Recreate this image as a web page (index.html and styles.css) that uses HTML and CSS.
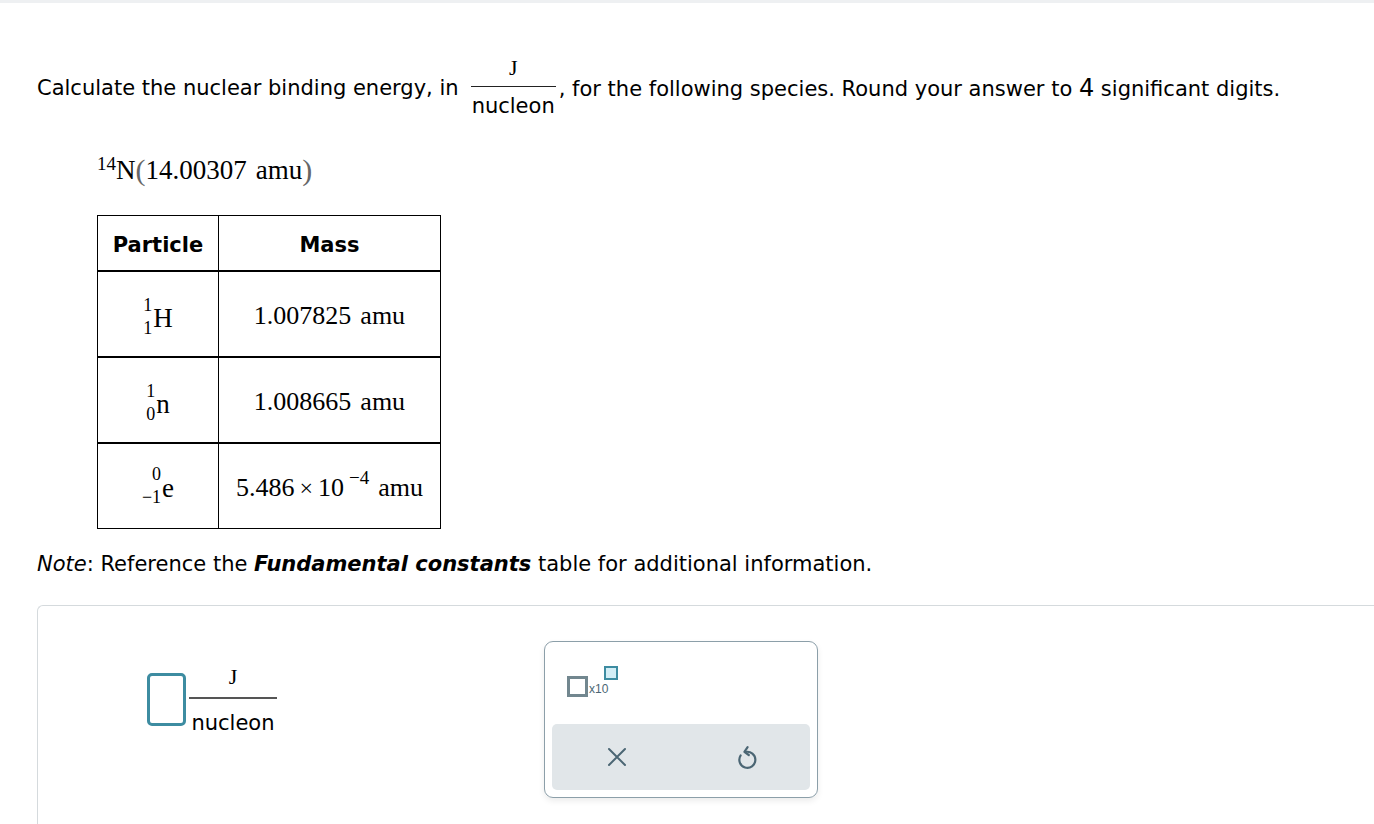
FILE: index.html
```html
<!DOCTYPE html>
<html>
<head>
<meta charset="utf-8">
<link rel="stylesheet" href="styles.css">
</head>
<body>
<div class="topbar"></div>
<div class="page">
  <div class="prompt"><span>Calculate the nuclear binding energy, in</span><span class="frac"><span class="num">J</span><span class="den">nucleon</span></span><span>, for the following species. Round your answer to <span class="four">4</span> significant digits.</span></div>

  <div class="species"><span class="sup14">14</span>N<span class="paren">(</span>14.00307<span class="sp"></span>amu<span class="paren">)</span></div>

  <table class="ptable">
    <tr class="head"><th class="c1">Particle</th><th class="c2">Mass</th></tr>
    <tr>
      <td class="c1"><span class="nuc"><span class="scripts"><span class="s-up">1</span><span class="s-dn">1</span></span><span class="sym">H</span></span></td>
      <td class="c2"><span class="mass">1.007825<span class="sp"></span>amu</span></td>
    </tr>
    <tr>
      <td class="c1"><span class="nuc"><span class="scripts"><span class="s-up">1</span><span class="s-dn">0</span></span><span class="sym">n</span></span></td>
      <td class="c2"><span class="mass">1.008665<span class="sp"></span>amu</span></td>
    </tr>
    <tr>
      <td class="c1"><span class="nuc nuc-e"><span class="scripts"><span class="s-up">0</span><span class="s-dn">−1</span></span><span class="sym">e</span></span></td>
      <td class="c2"><span class="mass">5.486<span class="times">×</span>10<span class="exp">−4</span><span class="sp"></span>amu</span></td>
    </tr>
  </table>

  <p class="note"><em>Note</em>: Reference the <strong><em>Fundamental constants</em></strong> table for additional information.</p>

  <div class="answer">
    <div class="entry">
      <div class="inbox"></div>
      <div class="afrac"><span class="anum">J</span><span class="aden">nucleon</span></div>
    </div>
    <div class="tools">
      <div class="sci">
        <span class="sbox"></span><span class="x10">x10</span><span class="ebox"></span>
      </div>
      <div class="btnbar">
        <div class="btn">
          <svg width="20" height="20" viewBox="0 0 20 20"><path d="M2 2 L18 18 M18 2 L2 18" stroke="#4b6674" stroke-width="2" fill="none" stroke-linecap="round"/></svg>
        </div>
        <div class="btn">
          <svg width="22" height="26" viewBox="0 0 22 26"><path d="M5.6 11.5 A8 8 0 1 0 10.5 8" stroke="#4b6674" stroke-width="2.2" fill="none" stroke-linecap="round"/><path d="M12.6 3.2 L9.4 7.8 L13.8 11" stroke="#4b6674" stroke-width="2.2" fill="none" stroke-linecap="round" stroke-linejoin="round"/></svg>
        </div>
      </div>
    </div>
  </div>
</div>
</body>
</html>
```

FILE: styles.css
```css
html, body {
  margin: 0;
  padding: 0;
  background: #fff;
}
body {
  font-family: "DejaVu Sans", Verdana, sans-serif;
  color: #000;
  overflow: hidden;
  height: 824px;
}
.topbar {
  height: 3px;
  background: #eef0f2;
}
.page {
  padding-left: 37px;
}
.prompt {
  margin: 54px 0 0 0;
  font-size: 21px;
  display: flex;
  align-items: center;
  white-space: pre;
}
.frac {
  display: flex;
  flex-direction: column;
  align-items: stretch;
  margin: 0 3px 0 12px;
}
.frac .num {
  font-family: "Liberation Serif", "Times New Roman", serif;
  font-size: 22px;
  line-height: 22px;
  padding: 0 0 7px;
  border-bottom: 1px solid #222;
  text-align: center;
}
.frac .den {
  font-size: 21px;
  line-height: 26px;
  padding: 6px 1px 0;
}
.four {
  font-size: 24px;
}
.species {
  margin: 28px 0 0 60px;
  font-family: "Liberation Serif", "Times New Roman", serif;
  font-size: 27px;
  line-height: 34px;
}
.sup14 {
  font-size: 19px;
  vertical-align: 9px;
}
.paren {
  color: #666;
  font-size: 30px;
  font-weight: 300;
  vertical-align: -1px;
}
.sp {
  display: inline-block;
  width: 9px;
}
.ptable {
  margin: 28px 0 0 60px;
  border-collapse: collapse;
}
.ptable th, .ptable td {
  border: 1px solid #000;
  padding: 0;
  text-align: center;
}
.ptable tr + tr td, .ptable tr.head th {
  border-bottom-width: 2px;
}
.ptable tr:last-child td {
  border-bottom-width: 1px;
}
.ptable .c1 { width: 120px; }
.ptable .c2 { width: 221px; }
.head th {
  height: 51px;
  padding-top: 3px;
  font-size: 21px;
  font-weight: bold;
}
.ptable td {
  height: 84px;
  font-family: "Liberation Serif", "Times New Roman", serif;
}
.ptable td.c2 {
  padding-top: 3px;
  height: 81px;
}
.nuc {
  display: inline-flex;
  align-items: flex-start;
  margin-top: 4px;
}
.scripts {
  display: flex;
  flex-direction: column;
  align-items: flex-end;
  font-size: 18px;
  line-height: 18px;
  margin-right: 1px;
}
.s-dn { margin-top: 5px; }
.sym {
  font-size: 27px;
  line-height: 30px;
  margin-top: 7px;
}
.nuc-e {
  margin-top: -2px;
}
.nuc-e .sym {
  margin-top: 8px;
}
.mass {
  font-size: 26px;
}
.times {
  margin: 0 5px;
  font-size: 24px;
}
.exp {
  font-size: 19px;
  position: relative;
  top: -12px;
  margin-left: 5px;
}
.note {
  margin: 23px 0 0 0;
  font-size: 21px;
  line-height: 24px;
}
.answer {
  margin-top: 29px;
  border: 1px solid #d5dadd;
  border-right: none;
  border-radius: 6px 0 0 0;
  height: 300px;
  display: flex;
  align-items: flex-start;
  padding-top: 35px;
}
.entry {
  display: flex;
  align-items: flex-start;
  margin: 32px 0 0 109px;
}
.inbox {
  width: 33px;
  height: 47px;
  border: 3px solid #3d8ca1;
  border-radius: 5px;
}
.afrac {
  display: flex;
  flex-direction: column;
  align-items: center;
  margin: -8px 0 0 3px;
}
.anum {
  font-family: "Liberation Serif", "Times New Roman", serif;
  font-size: 22px;
  line-height: 24px;
  padding-bottom: 8px;
  border-bottom: 2px solid #555;
  width: 88px;
  text-align: center;
}
.aden {
  font-size: 21px;
  line-height: 30px;
  padding-top: 9px;
}
.tools {
  margin-left: 267px;
  border: 1px solid #8c9fa9;
  border-radius: 9px;
  box-shadow: 0 3px 6px rgba(0,0,0,0.08);
  padding: 0 7px;
  box-sizing: border-box;
  width: 274px;
  height: 157px;
}
.sci {
  position: relative;
  height: 82px;
}
.sbox {
  position: absolute;
  left: 15px;
  top: 34px;
  width: 15px;
  height: 15px;
  border: 3px solid #72878f;
  background: #fff;
}
.x10 {
  position: absolute;
  left: 37px;
  top: 40px;
  font-family: "Liberation Sans", Arial, sans-serif;
  font-size: 12px;
  color: #4b6674;
}
.ebox {
  position: absolute;
  left: 52px;
  top: 24px;
  width: 10px;
  height: 10px;
  border: 2.5px solid #3d8ca1;
  background: #d3eef6;
}
.btnbar {
  display: flex;
  height: 66px;
  background: #e1e6e9;
  border-radius: 5px;
}
.btn {
  flex: 1;
  display: flex;
  align-items: center;
  justify-content: center;
}
```
